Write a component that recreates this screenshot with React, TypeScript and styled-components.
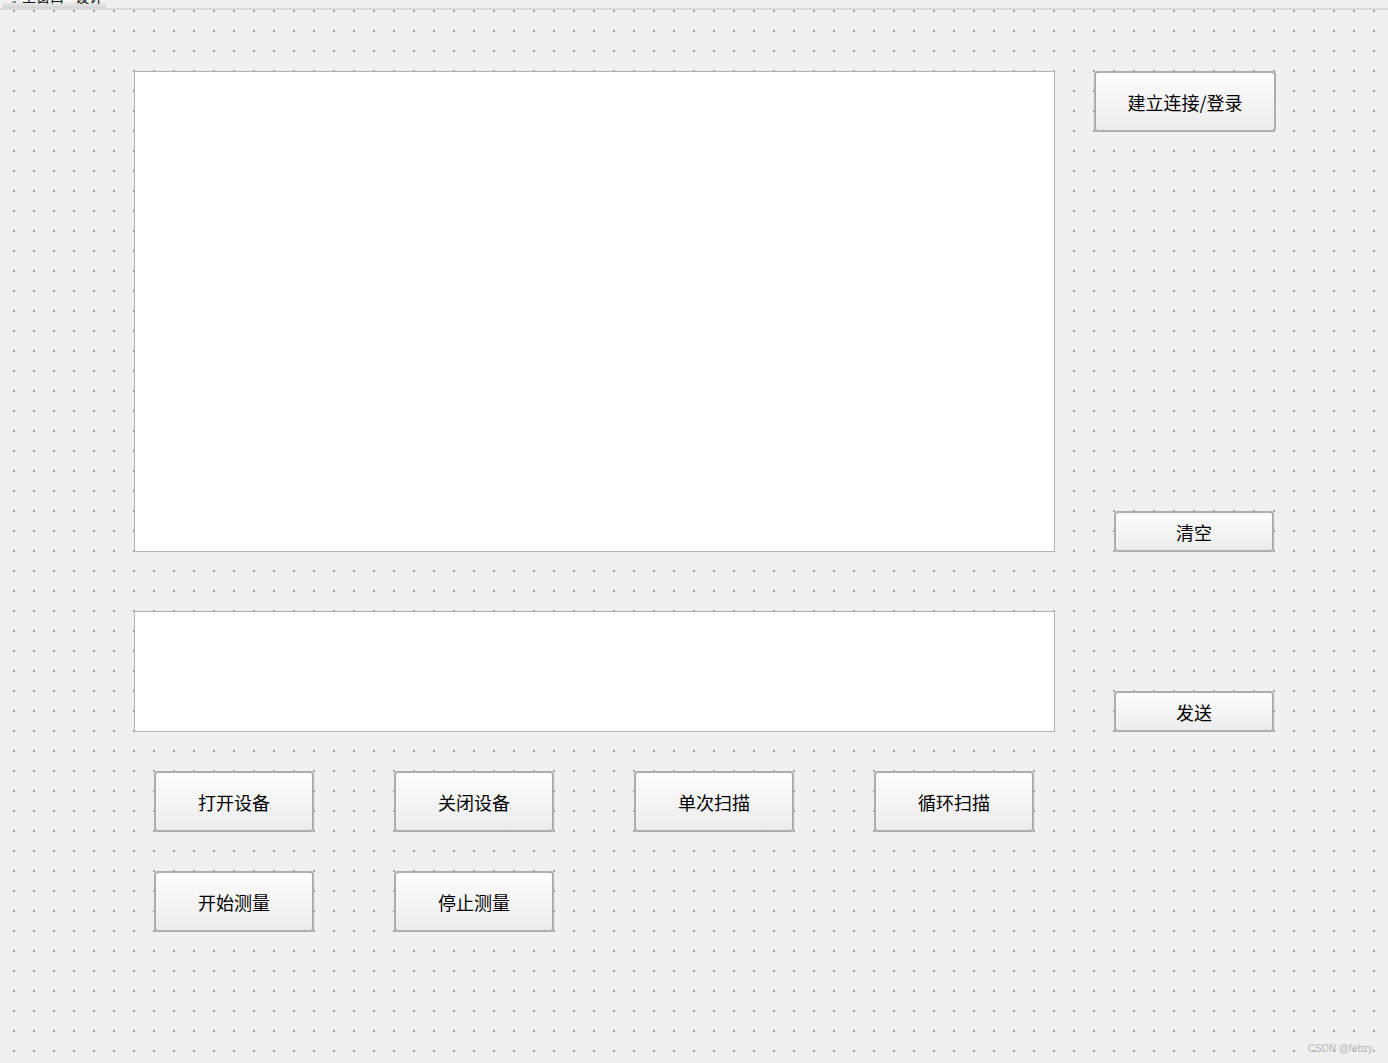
import React from 'react';
import styled, { createGlobalStyle } from 'styled-components';

const Global = createGlobalStyle`
  html, body { margin: 0; padding: 0; background: #f0f0f0; }
  body { font-family: "Noto Sans CJK SC", "Noto Sans", sans-serif; }
`;

const Page = styled.div`
  position: relative;
  display: flex;
  flex-direction: column;
  min-height: 1063px;
  overflow: hidden;
`;

const TopBar = styled.div`
  height: 8px;
  border-bottom: 2px solid #d9d9d9;
  display: flex;
  padding-left: 2px;
  background: #f0f0f0;
`;

const Tab = styled.div`
  width: 105px;
  height: 8px;
  overflow: hidden;
  background: linear-gradient(#f6f6f6, #d4d4d4);
  border-right: 1px solid #f0f0f0;
  display: flex;
  align-items: flex-end;
  gap: 6px;
  padding-left: 10px;
  box-sizing: border-box;
`;

const TabText = styled.span`
  font-size: 14px;
  line-height: 14px;
  margin-bottom: 5px;
  color: #111;
  white-space: nowrap;
`;

const TabIcon = styled.span`
  display: inline-block;
  width: 4px;
  height: 2px;
  background: linear-gradient(90deg, #e8a040, #3f8fd8);
  margin-bottom: 5px;
`;

const Canvas = styled.div`
  flex: 1;
  display: flex;
  align-items: flex-start;
  padding: 61px 0 0 134px;
  background-color: #f0f0f0;
  background-image: linear-gradient(90deg, #f0f0f0 18px, transparent 18px),
    linear-gradient(#f0f0f0 18px, #a0a0a0 18px);
  background-size: 20px 20px;
  background-position: 15px 2px;
`;

const LeftColumn = styled.div`
  display: flex;
  flex-direction: column;
  width: 921px;
`;

const TextPanel = styled.div<{ $h: number; $mt?: number }>`
  box-sizing: border-box;
  height: ${(p) => p.$h}px;
  margin-top: ${(p) => p.$mt ?? 0}px;
  background: #ffffff;
  border: 1px solid #b2b2b2;
`;

const ButtonRow = styled.div`
  display: flex;
  gap: 80px;
  padding-left: 20px;
  margin-top: 39px;
`;

const RightColumn = styled.div`
  display: flex;
  flex-direction: column;
  align-items: flex-start;
  margin-left: 39px;
`;

const PushButton = styled.button<{ $w: number; $h: number; $mt?: number; $ml?: number }>`
  box-sizing: border-box;
  width: ${(p) => p.$w}px;
  height: ${(p) => p.$h}px;
  margin-top: ${(p) => p.$mt ?? 0}px;
  margin-left: ${(p) => p.$ml ?? 0}px;
  padding: 0;
  border: 2px solid #adadad;
  border-radius: 4px;
  background: linear-gradient(#fdfdfd, #ececec);
  color: #000;
  font-family: "Noto Sans CJK SC", "Noto Sans", sans-serif;
  font-size: 18px;
  line-height: 1;
  display: flex;
  align-items: center;
  justify-content: center;
  flex-shrink: 0;
`;

const Watermark = styled.div`
  position: absolute;
  right: 13px;
  bottom: 9px;
  font-family: "Liberation Sans", Arial, sans-serif;
  font-size: 10px;
  color: #b3b3b3;
`;

export default function App() {
  return (
    <>
      <Global />
      <Page>
        <TopBar>
          <Tab>
            <TabIcon />
            <TabText>主窗口 - 设计</TabText>
          </Tab>
        </TopBar>
        <Canvas>
          <LeftColumn>
            <TextPanel $h={481} />
            <TextPanel $h={121} $mt={59} />
            <ButtonRow>
              <PushButton $w={160} $h={61}>打开设备</PushButton>
              <PushButton $w={160} $h={61}>关闭设备</PushButton>
              <PushButton $w={160} $h={61}>单次扫描</PushButton>
              <PushButton $w={160} $h={61}>循环扫描</PushButton>
            </ButtonRow>
            <ButtonRow>
              <PushButton $w={160} $h={61}>开始测量</PushButton>
              <PushButton $w={160} $h={61}>停止测量</PushButton>
            </ButtonRow>
          </LeftColumn>
          <RightColumn>
            <PushButton $w={182} $h={61}>建立连接/登录</PushButton>
            <PushButton $w={160} $h={41} $mt={379} $ml={20}>清空</PushButton>
            <PushButton $w={160} $h={41} $mt={139} $ml={20}>发送</PushButton>
          </RightColumn>
        </Canvas>
        <Watermark>CSDN @febzy.</Watermark>
      </Page>
    </>
  );
}
